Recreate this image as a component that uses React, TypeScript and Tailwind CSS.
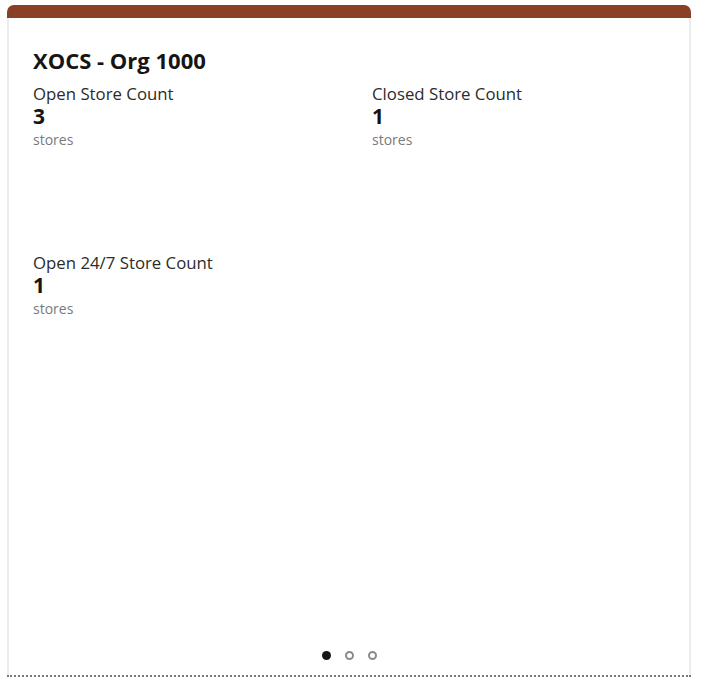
const metrics = [
  { label: 'Open Store Count', value: 3, unit: 'stores' },
  { label: 'Closed Store Count', value: 1, unit: 'stores' },
  { label: 'Open 24/7 Store Count', value: 1, unit: 'stores' },
];

function Metric({ label, value, unit }: { label: string; value: number; unit: string }) {
  return (
    <div className="h-[169px]">
      <p className="text-[16.8px] leading-[20px] text-[#2b2b2b]">{label}</p>
      <p className="text-[21px] font-bold leading-[25px] text-[#161513]">{value}</p>
      <p className="text-[14px] leading-[21px] text-[#7a7a7a]">{unit}</p>
    </div>
  );
}

export default function App() {
  return (
    <div className="h-[679px] w-[702px] bg-white pt-[5px] pl-[7px] font-['Open_Sans','Noto_Sans',sans-serif]">
      <div className="flex h-[670px] w-[684px] flex-col rounded-t-[7px] border-x-2 border-[#ececec] bg-white">
        {/* header strip */}
        <div className="-mx-[2px] h-[13px] rounded-t-[7px] bg-[#8a3f27]" />

        <div className="flex flex-1 flex-col px-[24px] pt-[29px]">
          <h2 className="text-[22px] font-bold leading-[26px] text-[#161513]">XOCS - Org 1000</h2>
          <div className="mt-[11px] grid grid-cols-[339px_1fr]">
            {metrics.map((m) => (
              <Metric key={m.label} {...m} />
            ))}
          </div>

          <div className="mt-auto mb-[15px] flex justify-center gap-[14px]">
            <span className="h-[9px] w-[9px] rounded-full bg-[#161513]" />
            <span className="h-[9px] w-[9px] rounded-full border-2 border-[#8a8a8a]" />
            <span className="h-[9px] w-[9px] rounded-full border-2 border-[#8a8a8a]" />
          </div>
        </div>
      </div>
      <div className="w-[684px] border-t-2 border-dotted border-[#7a7a7a]" />
    </div>
  );
}
